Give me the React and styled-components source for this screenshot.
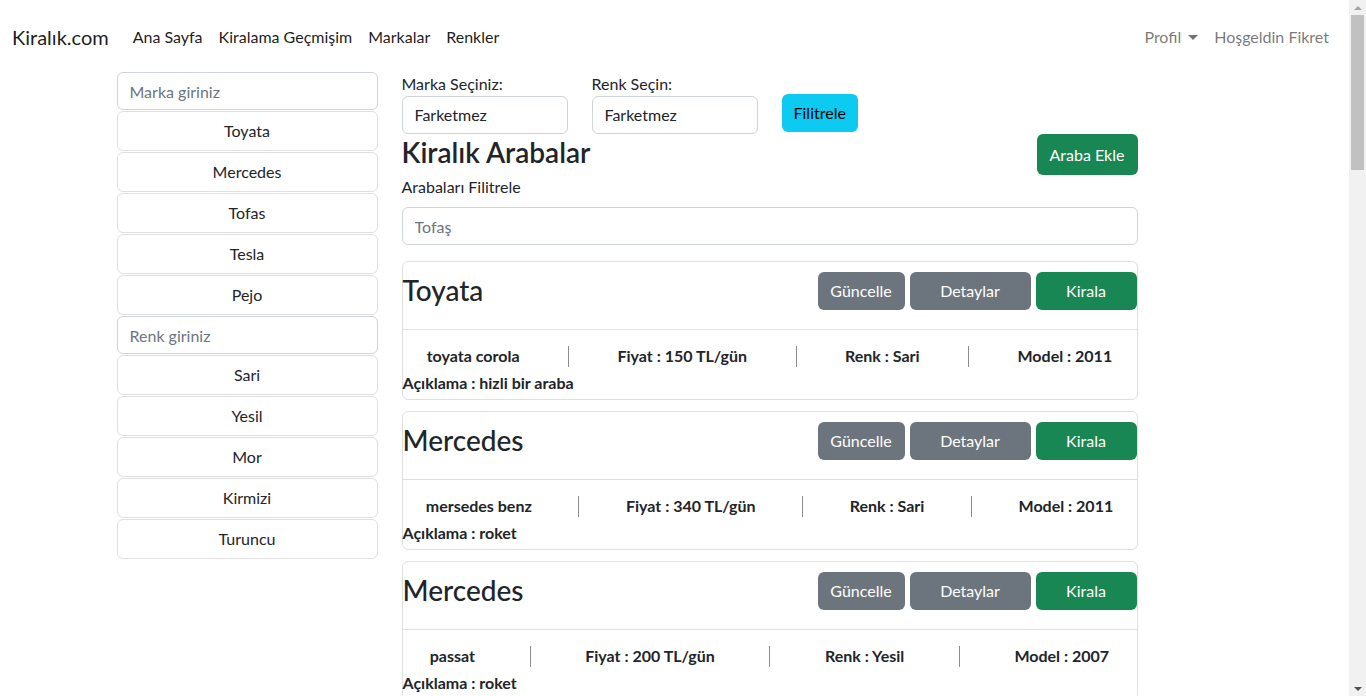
import styled, { createGlobalStyle } from "styled-components";

const GlobalStyle = createGlobalStyle`
  body {
    margin: 0;
    font-family: Lato, "Open Sans", "Liberation Sans", sans-serif;
    font-size: 16px;
    line-height: 24px;
    color: #212529;
    background: #fff;
  }
  * {
    box-sizing: border-box;
  }
`;

const Page = styled.div`
  width: 1349px;
`;

/* the browser scrollbar seen in the shot, drawn over the right edge */
const Scrollbar = styled.div`
  position: fixed;
  top: 0;
  right: 0;
  width: 17px;
  height: 100vh;
  background: #f1f1f1;
  display: flex;
  flex-direction: column;
  align-items: center;
`;

const Arrow = styled.div`
  width: 0;
  height: 0;
  margin: 6px 0 5px;
  border-left: 4px solid transparent;
  border-right: 4px solid transparent;
  border-bottom: ${(props) => (props.down ? "0" : "4px solid #a3a3a3")};
  border-top: ${(props) => (props.down ? "4px solid #505050" : "0")};
  margin-top: ${(props) => (props.down ? "auto" : "6px")};
`;

const Thumb = styled.div`
  width: 13px;
  height: 155px;
  background: #c1c1c1;
`;

const Navbar = styled.nav`
  display: flex;
  align-items: center;
  padding: 17px 12px 8px;
`;

const Brand = styled.a`
  font-size: 20px;
  line-height: 30px;
  padding: 5px 0;
  margin-right: 16px;
  color: rgba(0, 0, 0, 0.9);
  text-decoration: none;
`;

const NavLinks = styled.div`
  display: flex;
  align-items: center;
  margin-left: ${(props) => (props.right ? "auto" : "0")};
`;

const NavLink = styled.a`
  padding: 8px;
  color: ${(props) => (props.muted ? "rgba(0, 0, 0, 0.55)" : "rgba(0, 0, 0, 0.9)")};
  text-decoration: none;
  display: flex;
  align-items: center;
`;

const Caret = styled.span`
  display: inline-block;
  margin-left: 7px;
  border-top: 5px solid currentColor;
  border-left: 5px solid transparent;
  border-right: 5px solid transparent;
`;

const Container = styled.div`
  width: 1140px;
  margin: 7px auto 0;
  padding: 0 12px;
  display: flex;
  gap: 24px;
`;

const Sidebar = styled.div`
  width: 261px;
  flex: none;
  display: flex;
  flex-direction: column;
  gap: 1px;
`;

const SideInput = styled.input`
  height: 38px;
  padding: 6px 12px;
  border: 1px solid #ced4da;
  border-radius: 6px;
  font: inherit;
  color: #212529;
  &::placeholder {
    color: #6c757d;
  }
`;

const SideItem = styled.div`
  padding: 7px 16px;
  border: 1px solid rgba(0, 0, 0, 0.125);
  border-radius: 6px;
  text-align: center;
`;

const Main = styled.div`
  width: 736px;
  flex: none;
`;

const FilterForm = styled.div`
  display: flex;
  align-items: flex-end;
  gap: 24px;
`;

const Field = styled.div`
  display: flex;
  flex-direction: column;
`;

const Label = styled.label`
  display: block;
  margin-bottom: ${(props) => props.mb || 0}px;
`;

const Select = styled.div`
  width: 166px;
  height: 38px;
  padding: 6px 12px;
  border: 1px solid #ced4da;
  border-radius: 6px;
`;

const Button = styled.button`
  font: inherit;
  height: ${(props) => props.h || 38}px;
  width: ${(props) => (props.w ? props.w + "px" : "auto")};
  padding: 6px 12px;
  border: none;
  border-radius: 6px;
  cursor: pointer;
  background: ${(props) =>
    props.variant === "info"
      ? "#0dcaf0"
      : props.variant === "success"
      ? "#198754"
      : "#6c757d"};
  color: ${(props) => (props.variant === "info" ? "#000" : "#fff")};
  margin-bottom: ${(props) => props.mb || 0}px;
  flex: none;
`;

const TitleRow = styled.div`
  display: flex;
  justify-content: space-between;
  align-items: flex-start;
`;

const Title = styled.h3`
  font-size: 28px;
  font-weight: 600;
  line-height: 33.6px;
  margin: 2px 0 0;
`;

const SearchInput = styled(SideInput)`
  width: 100%;
  display: block;
`;

const CardList = styled.div`
  margin-top: 16px;
  display: flex;
  flex-direction: column;
  gap: 11px;
`;

const Card = styled.div`
  border: 1px solid rgba(0, 0, 0, 0.125);
  border-radius: 6px;
`;

const CardHeader = styled.div`
  display: flex;
  justify-content: space-between;
  align-items: flex-start;
  padding: 10px 0 15px;
  border-bottom: 1px solid rgba(0, 0, 0, 0.125);
`;

const CarBrand = styled.h3`
  font-size: 28px;
  font-weight: 500;
  line-height: 34px;
  margin: 1px 0 7px;
`;

const Actions = styled.div`
  display: flex;
  gap: 5px;
`;

const CardBody = styled.div`
  padding: 14px 0 4px;
  font-weight: 700;
`;

const InfoRow = styled.div`
  display: flex;
  justify-content: space-around;
  align-items: center;
  margin-bottom: 3px;
`;

const Divider = styled.div`
  width: 1px;
  height: 21px;
  background: #8a8d90;
`;

const brands = ["Toyata", "Mercedes", "Tofas", "Tesla", "Pejo"];
const colors = ["Sari", "Yesil", "Mor", "Kirmizi", "Turuncu"];

const cars = [
  { brand: "Toyata", name: "toyata corola", price: 150, color: "Sari", model: 2011, desc: "hizli bir araba" },
  { brand: "Mercedes", name: "mersedes benz", price: 340, color: "Sari", model: 2011, desc: "roket" },
  { brand: "Mercedes", name: "passat", price: 200, color: "Yesil", model: 2007, desc: "roket" },
];

const App = () => {
  return (
    <>
      <GlobalStyle />
      <Page>
        <Navbar>
          <Brand href="#">Kiralık.com</Brand>
          <NavLinks>
            <NavLink href="#">Ana Sayfa</NavLink>
            <NavLink href="#">Kiralama Geçmişim</NavLink>
            <NavLink href="#">Markalar</NavLink>
            <NavLink href="#">Renkler</NavLink>
          </NavLinks>
          <NavLinks right>
            <NavLink muted href="#">
              Profil
              <Caret />
            </NavLink>
            <NavLink muted href="#">Hoşgeldin Fikret</NavLink>
          </NavLinks>
        </Navbar>
        <Container>
          <Sidebar>
            <SideInput placeholder="Marka giriniz" />
            {brands.map((b) => (
              <SideItem key={b}>{b}</SideItem>
            ))}
            <SideInput placeholder="Renk giriniz" />
            {colors.map((c) => (
              <SideItem key={c}>{c}</SideItem>
            ))}
          </Sidebar>
          <Main>
            <FilterForm>
              <Field>
                <Label>Marka Seçiniz:</Label>
                <Select>Farketmez</Select>
              </Field>
              <Field>
                <Label>Renk Seçin:</Label>
                <Select>Farketmez</Select>
              </Field>
              <Button variant="info" mb={2}>
                Filitrele
              </Button>
            </FilterForm>
            <TitleRow>
              <Title>Kiralık Arabalar</Title>
              <Button variant="success" h={41} w={101}>
                Araba Ekle
              </Button>
            </TitleRow>
            <Label mb={8}>Arabaları Filitrele</Label>
            <SearchInput placeholder="Tofaş" />
            <CardList>
              {cars.map((car, i) => (
                <Card key={i}>
                  <CardHeader>
                    <CarBrand>{car.brand}</CarBrand>
                    <Actions>
                      <Button w={87}>Güncelle</Button>
                      <Button w={121}>Detaylar</Button>
                      <Button variant="success" w={101}>
                        Kirala
                      </Button>
                    </Actions>
                  </CardHeader>
                  <CardBody>
                    <InfoRow>
                      <span>{car.name}</span>
                      <Divider />
                      <span>Fiyat : {car.price} TL/gün</span>
                      <Divider />
                      <span>Renk : {car.color}</span>
                      <Divider />
                      <span>Model : {car.model}</span>
                    </InfoRow>
                    <div>Açıklama : {car.desc}</div>
                  </CardBody>
                </Card>
              ))}
            </CardList>
          </Main>
        </Container>
      </Page>
      <Scrollbar>
        <Arrow />
        <Thumb />
        <Arrow down />
      </Scrollbar>
    </>
  );
};

export default App;
